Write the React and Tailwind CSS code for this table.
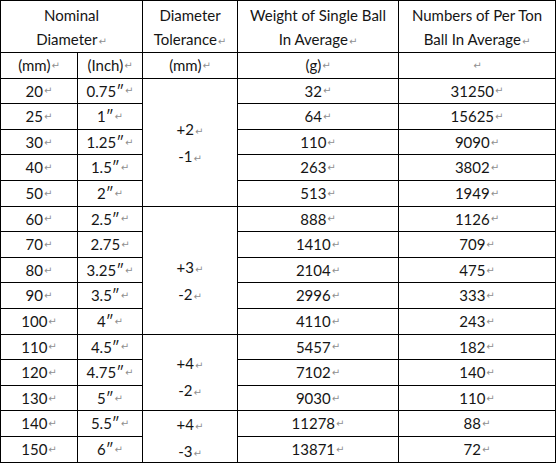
import React from "react";

const rows = [
  ["20", "0.75″", "32", "31250"],
  ["25", "1″", "64", "15625"],
  ["30", "1.25″", "110", "9090"],
  ["40", "1.5″", "263", "3802"],
  ["50", "2″", "513", "1949"],
  ["60", "2.5″", "888", "1126"],
  ["70", "2.75", "1410", "709"],
  ["80", "3.25″", "2104", "475"],
  ["90", "3.5″", "2996", "333"],
  ["100", "4″", "4110", "243"],
  ["110", "4.5″", "5457", "182"],
  ["120", "4.75″", "7102", "140"],
  ["130", "5″", "9030", "110"],
  ["140", "5.5″", "11278", "88"],
  ["150", "6″", "13871", "72"],
];

// tolerance blocks, keyed by the row index where they start
const tolerances = {
  0: { span: "row-span-5", pad: "pt-[4px]", plus: "+2", minus: "-1" },
  5: { span: "row-span-5", pad: "pt-[24px]", plus: "+3", minus: "-2" },
  10: { span: "row-span-3", pad: "pt-[12px]", plus: "+4", minus: "-2" },
  13: { span: "row-span-2", pad: "pt-[6px]", plus: "+4", minus: "-3" },
};

const Mark = () => (
  <span className="ml-[1px] text-[10px] text-[#8f8f8f] font-['DejaVu_Sans',sans-serif]">↵</span>
);

const Cell = ({ children, className = "" }) => (
  <div className={`bg-white flex items-center justify-center whitespace-nowrap ${className}`}>
    {children}
  </div>
);

const App = () => {
  return (
    <div className="bg-white w-[558px] h-[464px] font-['Lato',sans-serif] text-[15px] text-[#151515]">
      <div className="grid grid-cols-[76px_64px_94px_160px_156px] grid-rows-[51px_repeat(16,24.6px)] gap-px bg-black p-px w-[556px]">
        {/* header */}
        <Cell className="col-span-2 flex-col leading-[24px] pt-[4px]">
          <span>Nominal</span>
          <span>
            Diameter
            <Mark />
          </span>
        </Cell>
        <Cell className="flex-col leading-[24px] pt-[4px]">
          <span>Diameter</span>
          <span>
            Tolerance
            <Mark />
          </span>
        </Cell>
        <Cell className="flex-col leading-[24px] pt-[4px]">
          <span>Weight of Single Ball</span>
          <span>
            In Average
            <Mark />
          </span>
        </Cell>
        <Cell className="flex-col leading-[24px] pt-[4px]">
          <span>Numbers of Per Ton</span>
          <span>
            Ball In Average
            <Mark />
          </span>
        </Cell>

        {/* units */}
        <Cell>
          (mm)
          <Mark />
        </Cell>
        <Cell>
          (Inch)
          <Mark />
        </Cell>
        <Cell>
          (mm)
          <Mark />
        </Cell>
        <Cell>
          (g)
          <Mark />
        </Cell>
        <Cell>
          <Mark />
        </Cell>

        {rows.map((r, i) => {
          const tol = tolerances[i];
          return (
            <React.Fragment key={r[0]}>
              <Cell>
                {r[0]}
                <Mark />
              </Cell>
              <Cell>
                {r[1]}
                <Mark />
              </Cell>
              {tol && (
                <Cell className={`${tol.span} ${tol.pad} flex-col leading-[24px]`}>
                  <span>
                    {tol.plus}
                    <Mark />
                  </span>
                  <span>
                    {tol.minus}
                    <Mark />
                  </span>
                </Cell>
              )}
              <Cell>
                {r[2]}
                <Mark />
              </Cell>
              <Cell>
                {r[3]}
                <Mark />
              </Cell>
            </React.Fragment>
          );
        })}
      </div>
    </div>
  );
};

export default App;
